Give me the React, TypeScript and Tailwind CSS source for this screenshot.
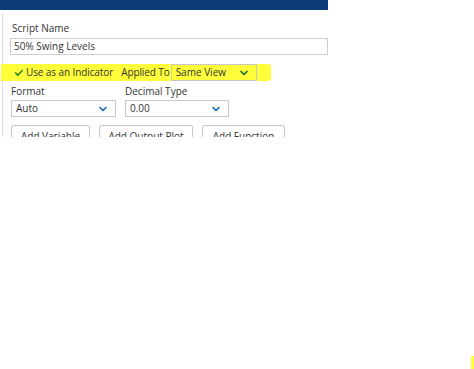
import { Check, ChevronDown } from 'lucide-react';

function Select({ value, width, tone }: { value: string; width: string; tone: string }) {
  return (
    <div className={`flex h-[17px] shrink-0 items-center justify-between border border-[#c8c8c8] pl-[4px] pr-[6px] ${width}`}>
      <span>{value}</span>
      <ChevronDown size={12} strokeWidth={3.5} className={tone} />
    </div>
  );
}

export default function App() {
  return (
    <div className="relative h-[369px] w-[474px] whitespace-nowrap bg-white text-[10px] text-[#333] [font-family:'Open_Sans',sans-serif]">
      <div className="h-[137px] w-[328px] overflow-hidden">
        <div className="h-[10px] bg-[#0b3c76]" />
        <div className="ml-[2px] mt-[4px] h-[140px] border-l border-[#dcdcdc] pl-[7px] pt-[6px]">
          <div className="pl-[2px] leading-[16px]">Script Name</div>
          <div className="mt-[2px] flex h-[17px] items-center border border-[#cfcfcf] pl-[3px]">50% Swing Levels</div>
          <div className="-ml-[9px] mt-[9px] flex h-[17px] w-[270px] items-center rounded-r-[3px] bg-[#ffff3a] pl-[13px]">
            <Check size={10} strokeWidth={4} className="shrink-0 text-[#2e8b1e]" />
            <span className="ml-[2px] tracking-[-0.1px]">Use as an Indicator</span>
            <span className="ml-[8px] tracking-[-0.1px]">Applied To</span>
            <div className="ml-[1px]">
              <Select value="Same View" width="w-[86px]" tone="text-[#1d6a3c]" />
            </div>
          </div>
          <div className="mt-[1px] flex gap-[9px] pl-[1px] leading-[18px]">
            <div className="w-[105px]">Format</div>
            <div>Decimal Type</div>
          </div>
          <div className="flex gap-[9px] pl-[1px]">
            <Select value="Auto" width="w-[105px]" tone="text-[#1f6fb8]" />
            <Select value="0.00" width="w-[104px]" tone="text-[#1f6fb8]" />
          </div>
          <div className="mt-[8px] flex gap-[9px] pl-[1px]">
            <div className="flex h-[22px] w-[79px] items-center justify-center rounded-[2px] border border-[#c8c8c8]">Add Variable</div>
            <div className="flex h-[22px] w-[94px] items-center justify-center rounded-[2px] border border-[#c8c8c8]">Add Output Plot</div>
            <div className="flex h-[22px] w-[83px] items-center justify-center rounded-[2px] border border-[#c8c8c8]">Add Function</div>
          </div>
        </div>
      </div>
      <div className="absolute left-[471px] top-[356px] h-[13px] w-[3px] bg-[#ffff3a]" />
    </div>
  );
}
